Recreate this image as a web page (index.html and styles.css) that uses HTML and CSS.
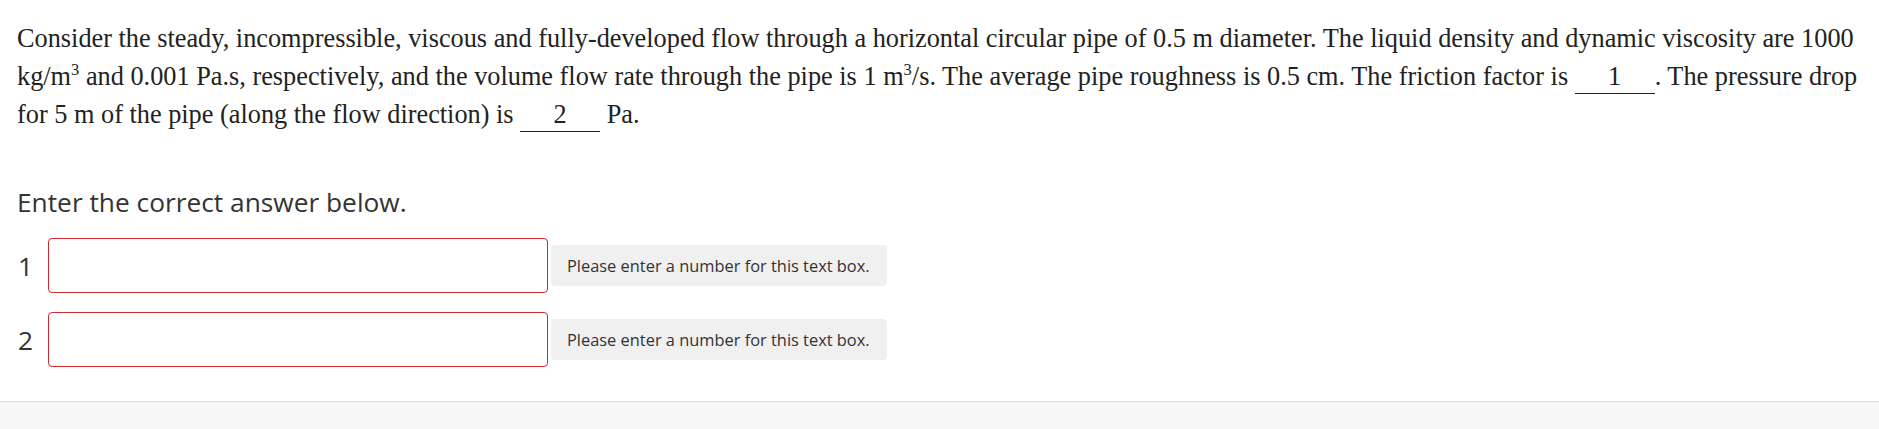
FILE: index.html
```html
<!DOCTYPE html>
<html>
<head>
<meta charset="utf-8">
<link rel="stylesheet" href="styles.css">
</head>
<body>
<div class="page">
  <p class="question">Consider the steady, incompressible, viscous and fully-developed flow through a horizontal circular pipe of 0.5 m diameter. The liquid density and dynamic viscosity are 1000 kg/m<sup>3</sup> and 0.001 Pa.s, respectively, and the volume flow rate through the pipe is 1 m<sup>3</sup>/s. The average pipe roughness is 0.5 cm. The friction factor is <span class="blank">1</span>. The pressure drop for 5 m of the pipe (along the flow direction) is <span class="blank">2</span> Pa.</p>
  <p class="prompt">Enter the correct answer below.</p>
  <div class="answers">
    <div class="row">
      <span class="num">1</span>
      <input class="box" type="text">
      <span class="tip">Please enter a number for this text box.</span>
    </div>
    <div class="row">
      <span class="num">2</span>
      <input class="box" type="text">
      <span class="tip">Please enter a number for this text box.</span>
    </div>
  </div>
</div>
<div class="footer"></div>
</body>
</html>
```

FILE: styles.css
```css
html, body {
  margin: 0;
  padding: 0;
  background: #fff;
}
.page {
  padding: 20px 6px 0 17px;
  height: 381px;
  box-sizing: border-box;
}
.question {
  margin: 0;
  font-family: "Liberation Serif", "Times New Roman", serif;
  font-size: 26.3px;
  line-height: 38px;
  color: #222;
}
.question sup {
  font-size: 16.5px;
  line-height: 0;
  vertical-align: 10px;
}
.blank {
  display: inline-block;
  width: 80px;
  text-align: center;
  border-bottom: 1px solid #222;
  line-height: 32px;
}
.prompt {
  margin: 50px 0 0 0;
  font-family: "Open Sans", sans-serif;
  font-size: 26.3px;
  line-height: 36px;
  color: #333;
}
.answers {
  margin-top: 18px;
  display: flex;
  flex-direction: column;
  gap: 19px;
}
.row {
  display: flex;
  align-items: center;
}
.num {
  width: 30px;
  padding-left: 1px;
  font-family: "Open Sans", sans-serif;
  font-size: 26.3px;
  color: #333;
}
.box {
  width: 500px;
  height: 55px;
  box-sizing: border-box;
  border: 1px solid #d0282e;
  border-radius: 4px;
  margin: 0;
  background: #fff;
}
.tip {
  margin-left: 3px;
  height: 41px;
  padding: 0 17px 0 16px;
  display: flex;
  align-items: center;
  background: #f0f0f0;
  border-radius: 4px;
  font-family: "Open Sans", sans-serif;
  font-size: 16.4px;
  color: #333;
}
.footer {
  border-top: 1px solid #dcdcdc;
  background: #f7f7f7;
  height: 40px;
  margin-top: 20px;
}
```
